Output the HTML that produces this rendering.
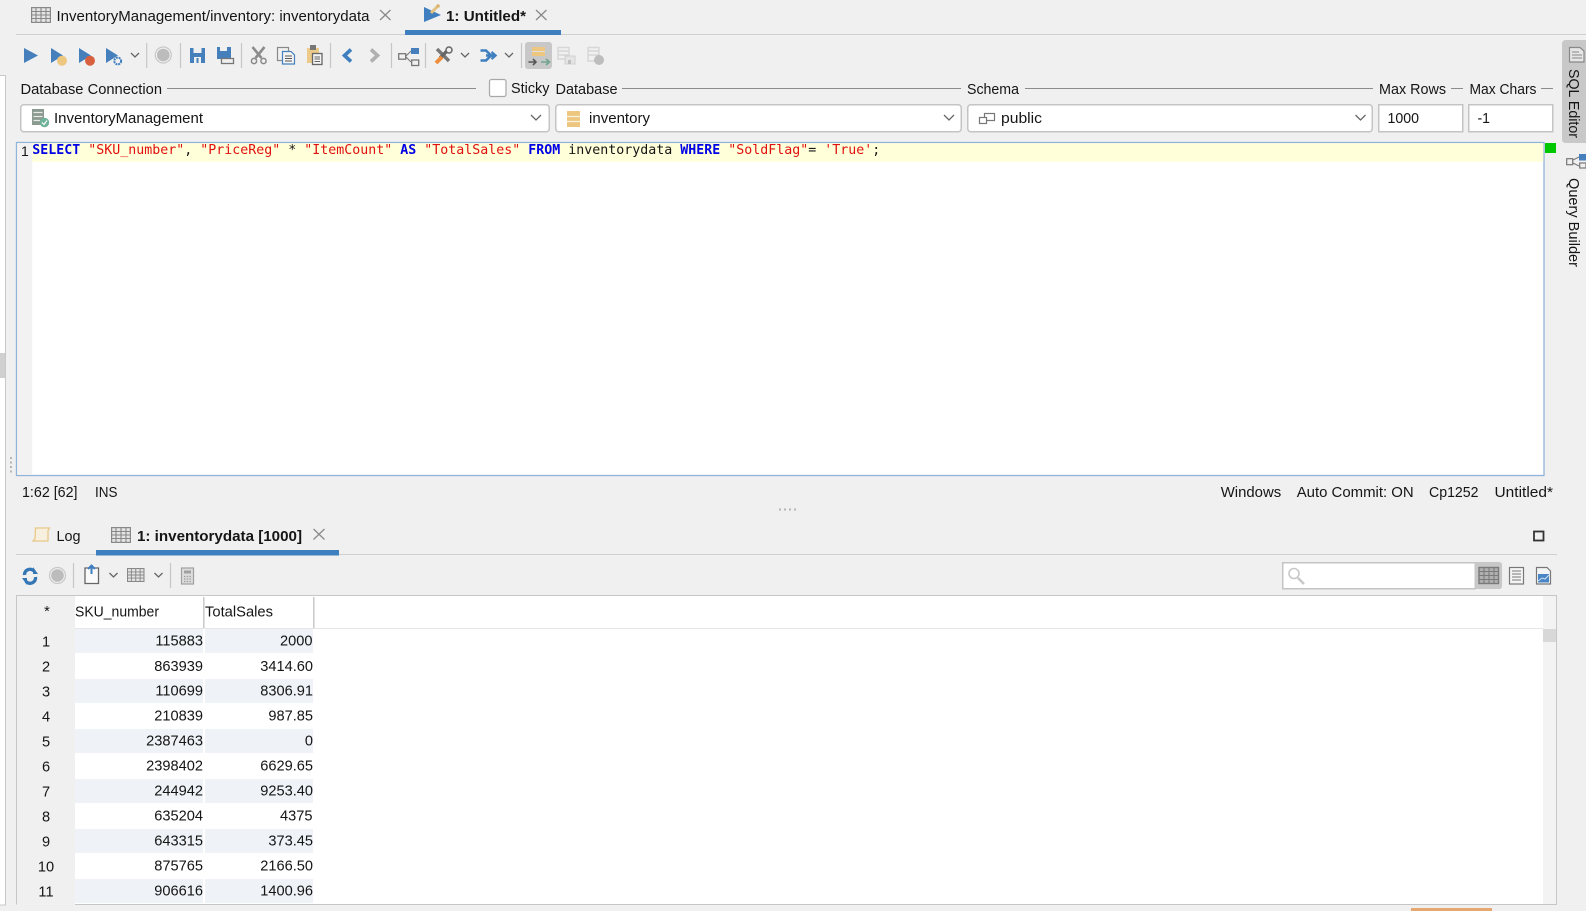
<!DOCTYPE html>
<html><head><meta charset="utf-8"><title>Inventory</title>
<style>
html,body{margin:0;padding:0;background:#f0f0f0;overflow:hidden}
svg{display:block}
text{font-family:"Liberation Sans",Arial,sans-serif;font-size:15px;fill:#151515;white-space:pre}
.n{font-size:14.6px;text-anchor:end}
.r{font-size:14.6px;text-anchor:middle}
.m{font-family:"DejaVu Sans Mono","Liberation Mono",monospace;font-size:13.28px}
.k{fill:#0000e6;font-weight:bold}.s{fill:#e01010}
.ch{fill:none;stroke:#666;stroke-width:1.3}
.x{fill:none;stroke:#8a8a8a;stroke-width:1.3}
.sep{stroke:#c6c6c6;stroke-width:1.2}
.ln{stroke:#8c8c8c;stroke-width:1}
.box{fill:#fff;stroke:#c4c4c4;stroke-width:1.5}
</style></head><body>
<svg xmlns="http://www.w3.org/2000/svg" width="1586" height="911" viewBox="0 0 1586 911">
<defs>
<symbol id="grid" viewBox="0 0 20 16"><rect x=".6" y=".6" width="18.8" height="14.8" fill="#e4e4e4" stroke="#888" stroke-width="1.2"/><path d="M0 4.5H20M0 8H20M0 11.5H20M5 0V16M10 0V16M15 0V16" stroke="#888" stroke-width="1.1" fill="none"/></symbol>
</defs>
<rect width="1586" height="911" fill="#f0f0f0"/>

<!-- left strip -->
<rect x="0" y="75" width="5.500" height="830" fill="#fff"/>
<path d="M0 75.500H5.500V905H0" fill="none" stroke="#c8c8c8" stroke-width="1"/>
<rect x="0" y="353" width="5" height="25" fill="#d0d0d0"/>

<!-- top tabs -->
<path d="M16 34.500H1586" stroke="#cfcfcf" stroke-width="1"/>
<use href="#grid" x="31" y="7" width="20" height="16"/>
<text x="56.500" y="21" textLength="313" lengthAdjust="spacingAndGlyphs">InventoryManagement/inventory: inventorydata</text>
<path class="x" d="M380 10L390.500 20M390.500 10L380 20"/>
<path d="M424 7L441 15L424 22Z" fill="#3f7fbf"/>
<path d="M431 13L437 7" stroke="#e2c27f" stroke-width="3" fill="none"/>
<circle cx="438" cy="6" r="1.800" fill="#d9b36a"/>
<text x="446" y="21" textLength="80" lengthAdjust="spacingAndGlyphs" style="font-weight:bold">1: Untitled*</text>
<path class="x" d="M536 10L546.500 20M546.500 10L536 20"/>
<rect x="405" y="30" width="156" height="5" fill="#3f7fbf"/>

<!-- toolbar -->
<g fill="#4580bd">
<path d="M24 48L38 55.500L24 63Z"/>
<path d="M51 48L63 55.500L51 63Z"/>
<path d="M79 48L91 55.500L79 63Z"/>
<path d="M106 48L118 55.500L106 63Z"/>
</g>
<circle cx="62" cy="60.700" r="5" fill="#edc77f"/>
<circle cx="90" cy="60.700" r="5" fill="#d9603f"/>
<circle cx="117.700" cy="61" r="3.400" fill="#f0f0f0" stroke="#3f7fbf" stroke-width="2" stroke-dasharray="2 .8"/>
<path class="ch" d="M131 53L135 57L139 53"/>
<path class="sep" d="M146.700 43V68M180.500 43V68M241.500 43V68M330.500 43V68M391.500 43V68M425.500 43V68M521.500 43V68"/>
<circle cx="163.300" cy="55" r="8" fill="#f0f0f0" stroke="#c8c8c8" stroke-width="1.200"/>
<circle cx="163.300" cy="55" r="6.300" fill="#bcbcbc"/>
<!-- save -->
<path d="M190 48H205V63H190Z" fill="#4580bd"/>
<rect x="193.500" y="48" width="8" height="5" fill="#f0f0f0"/>
<rect x="194" y="57" width="7" height="6" fill="#f0f0f0"/>
<rect x="196.500" y="58" width="2" height="5" fill="#4580bd"/>
<!-- save all -->
<path d="M217 47H231V59H217Z" fill="#4580bd"/>
<rect x="220" y="47" width="7" height="4" fill="#f0f0f0"/>
<rect x="221.500" y="58.500" width="12" height="5" fill="#f0f0f0" stroke="#777" stroke-width="1.300"/>
<!-- cut -->
<path d="M252.500 47L261.500 58M264.500 47L255.500 58" stroke="#8c8c8c" stroke-width="2.600" fill="none"/>
<circle cx="254" cy="61" r="2.600" fill="none" stroke="#888" stroke-width="1.500"/>
<circle cx="263.500" cy="61" r="2.600" fill="none" stroke="#888" stroke-width="1.500"/>
<!-- copy -->
<rect x="277.500" y="47.500" width="11" height="13" fill="#f0f0f0" stroke="#888" stroke-width="1.200"/>
<path d="M282.500 51.500H291L294.500 55V64H282.500Z" fill="#f4f4f4" stroke="#4580bd" stroke-width="1.200"/>
<path d="M285 56H292M285 58.500H292M285 61H292" stroke="#555" stroke-width="1"/>
<!-- paste -->
<rect x="307" y="48" width="12" height="15" fill="#eccb8a"/>
<rect x="310" y="45" width="6" height="5" fill="#777"/>
<rect x="312.500" y="53.500" width="9.500" height="11" fill="#f4f4f4" stroke="#666" stroke-width="1.300"/>
<path d="M314.500 57H320M314.500 59H320M314.500 61.500H320" stroke="#666" stroke-width="1"/>
<!-- nav -->
<path d="M351 49.500L344.500 55.500L351 61.500" fill="none" stroke="#3f7fbf" stroke-width="3.600"/>
<path d="M371 49.500L377.500 55.500L371 61.500" fill="none" stroke="#b0b0b0" stroke-width="3.600"/>
<!-- query builder -->
<rect x="411" y="48" width="8" height="6" fill="#4580bd"/>
<rect x="398.700" y="53.700" width="7" height="5.500" fill="none" stroke="#777" stroke-width="1.300"/>
<rect x="411.700" y="60" width="7" height="5.500" fill="none" stroke="#777" stroke-width="1.300"/>
<path d="M406 56L411 51M406 57L411 62" stroke="#777" stroke-width="1"/>
<!-- tools -->
<path d="M437 49L449 61" stroke="#777" stroke-width="3.400"/>
<path d="M450 48L440 58" stroke="#666" stroke-width="3.400"/>
<path d="M436 63L442 57" stroke="#ee8e3c" stroke-width="4"/>
<circle cx="449" cy="50" r="3" fill="#f0f0f0" stroke="#666" stroke-width="1.500"/>
<path class="ch" d="M461 53L465 57L469 53"/>
<!-- arrow -->
<path d="M480.500 50.500H486L491 55.500L486 60.500H480.500" fill="none" stroke="#3f7fbf" stroke-width="2.600"/>
<path d="M486 55.500H495M491.500 52L495.500 55.500L491.500 59" fill="none" stroke="#3f7fbf" stroke-width="2.400"/>
<path class="ch" d="M505 53L509 57L513 53"/>
<!-- active db -->
<rect x="525" y="42" width="27" height="27" rx="3" fill="#c8c8c8"/>
<rect x="532" y="47" width="13" height="9" fill="#edc77f"/>
<path d="M532 51.500H545" stroke="#e0e0e0" stroke-width="1"/>
<path d="M528.500 62H535.500M533 59L536 62L533 65" fill="none" stroke="#555" stroke-width="1.600"/>
<path d="M541 62H549M546 59L549.500 62L546 65" fill="none" stroke="#6fa58f" stroke-width="1.600"/>
<!-- disabled -->
<path d="M558 47.500H569V59H558ZM558 51H569M558 55H569" fill="none" stroke="#d6d6d6" stroke-width="1.400"/>
<rect x="565" y="56" width="10" height="8" fill="#e4e4e4" stroke="#cfcfcf"/>
<rect x="568" y="60" width="3" height="4" fill="#bfbfbf"/>
<path d="M588 47.500H599V61H588ZM588 51H599M588 55H599" fill="none" stroke="#d6d6d6" stroke-width="1.400"/>
<circle cx="599" cy="60" r="5" fill="#bdbdbd"/>

<!-- labels -->
<text x="20.500" y="94" textLength="141.500" lengthAdjust="spacingAndGlyphs">Database Connection</text>
<path class="ln" d="M167 88.500H476"/>
<rect x="489.500" y="79.500" width="16.500" height="17" rx="2" fill="#fff" stroke="#a8a8a8" stroke-width="1.200"/>
<text x="511" y="93" textLength="38.500" lengthAdjust="spacingAndGlyphs">Sticky</text>
<text x="555.500" y="94" textLength="62" lengthAdjust="spacingAndGlyphs">Database</text>
<path class="ln" d="M622 88.500H961"/>
<text x="967" y="94" textLength="52" lengthAdjust="spacingAndGlyphs">Schema</text>
<path class="ln" d="M1025 88.500H1373"/>
<text x="1379" y="94" textLength="67" lengthAdjust="spacingAndGlyphs">Max Rows</text>
<path class="ln" d="M1451 88.500H1463"/>
<text x="1469.500" y="94" textLength="67" lengthAdjust="spacingAndGlyphs">Max Chars</text>
<path class="ln" d="M1541 88.500H1553"/>

<!-- combos -->
<rect class="box" x="20.750" y="104.750" width="528.500" height="27" rx="3"/>
<rect class="box" x="555.750" y="104.750" width="405.500" height="27" rx="3"/>
<rect class="box" x="967.750" y="104.750" width="404.500" height="27" rx="3"/>
<rect class="box" x="1378.750" y="104.750" width="84" height="27" rx="0"/>
<rect class="box" x="1468.750" y="104.750" width="84" height="27" rx="0"/>
<rect x="32" y="109" width="12" height="16" fill="#8a9a90"/>
<path d="M33.500 112.500H42.500M33.500 116.500H42.500M33.500 120.500H40" stroke="#e8e8e8" stroke-width="1.300"/>
<circle cx="44.500" cy="122.500" r="4.700" fill="#6fb39a"/>
<path d="M42 122.500L44 124.500L47 120.500" fill="none" stroke="#fff" stroke-width="1.200"/>
<text x="54" y="123" textLength="149" lengthAdjust="spacingAndGlyphs">InventoryManagement</text>
<path class="ch" d="M531 115L536 120L541 115"/>
<rect x="567" y="111" width="13" height="16" fill="#edc77f"/>
<path d="M567 116.500H580M567 121.500H580" stroke="#fbf2de" stroke-width="1.300"/>
<text x="589" y="123" textLength="61" lengthAdjust="spacingAndGlyphs">inventory</text>
<path class="ch" d="M944 115L949 120L954 115"/>
<rect x="984.500" y="113.500" width="10" height="7" fill="none" stroke="#777" stroke-width="1.200"/>
<rect x="979.500" y="117.500" width="7" height="6" fill="#fff" stroke="#777" stroke-width="1.200"/>
<text x="1001" y="123" textLength="41" lengthAdjust="spacingAndGlyphs">public</text>
<path class="ch" d="M1355.500 115L1360.500 120L1365.500 115"/>
<text x="1387.500" y="123" textLength="31.500" lengthAdjust="spacingAndGlyphs">1000</text>
<text x="1477.500" y="123" textLength="12.500" lengthAdjust="spacingAndGlyphs">-1</text>

<!-- editor -->
<rect x="16.500" y="142.500" width="1527.500" height="333" fill="#fff" stroke="#8fb3d9" stroke-width="1.300"/>
<rect x="17.200" y="143.200" width="15" height="331.600" fill="#f2f2f2"/>
<rect x="32" y="143.200" width="1511.300" height="18.500" fill="#ffffd9"/>
<rect x="1545" y="143" width="11" height="10" fill="#00c800"/>
<text x="21" y="156" style="font-size:14px">1</text>
<text class="m" x="32.300" y="154" textLength="848" xml:space="preserve"><tspan class="k">SELECT</tspan> <tspan class="s">"SKU_number"</tspan>, <tspan class="s">"PriceReg"</tspan> * <tspan class="s">"ItemCount"</tspan> <tspan class="k">AS</tspan> <tspan class="s">"TotalSales"</tspan> <tspan class="k">FROM</tspan> inventorydata <tspan class="k">WHERE</tspan> <tspan class="s">"SoldFlag"</tspan>= <tspan class="s">'True'</tspan>;</text>
<g fill="#b5b5b5"><rect x="10" y="457" width="2" height="2"/><rect x="10" y="461.500" width="2" height="2"/><rect x="10" y="466" width="2" height="2"/><rect x="10" y="470.500" width="2" height="2"/></g>

<!-- right vertical tabs -->
<path d="M1586 40H1566Q1562 40 1562 44V139Q1562 143 1566 143H1586Z" fill="#c8c8c8"/>
<path d="M1569.500 47.500H1580L1584 51V62H1569.500Z" fill="#e6e6e6" stroke="#888" stroke-width="1.200"/>
<path d="M1572 52H1579M1572 55H1582M1572 58H1582" stroke="#888" stroke-width="1"/>
<text transform="translate(1569,69) rotate(90)" textLength="69" lengthAdjust="spacingAndGlyphs">SQL Editor</text>
<rect x="1579" y="154" width="7" height="6.500" fill="#4580bd"/>
<rect x="1566.700" y="158.700" width="6" height="6" fill="none" stroke="#777" stroke-width="1.200"/>
<rect x="1579.700" y="163" width="6.300" height="5" fill="none" stroke="#777" stroke-width="1.200"/>
<path d="M1573 160L1579 157M1573 163L1579 166" stroke="#777" stroke-width="1"/>
<text transform="translate(1569,178) rotate(90)" textLength="89" lengthAdjust="spacingAndGlyphs">Query Builder</text>

<!-- status -->
<text x="22" y="497" textLength="55.500" lengthAdjust="spacingAndGlyphs">1:62 [62]</text>
<text x="95" y="497" textLength="22.500" lengthAdjust="spacingAndGlyphs">INS</text>
<text x="1220.700" y="497" textLength="60.500" lengthAdjust="spacingAndGlyphs">Windows</text>
<text x="1296.700" y="497" textLength="117" lengthAdjust="spacingAndGlyphs">Auto Commit: ON</text>
<text x="1429" y="497" textLength="49.500" lengthAdjust="spacingAndGlyphs">Cp1252</text>
<text x="1494.500" y="497" textLength="58.500" lengthAdjust="spacingAndGlyphs">Untitled*</text>
<g fill="#b5b5b5"><rect x="779" y="508.500" width="2" height="2"/><rect x="784" y="508.500" width="2" height="2"/><rect x="789" y="508.500" width="2" height="2"/><rect x="794" y="508.500" width="2" height="2"/></g>

<!-- result tabs -->
<path d="M16 554.500H1557" stroke="#cfcfcf" stroke-width="1"/>
<path d="M35.500 528H49.500L48 530.500V541H33L35 538.500Z" fill="#f7f0df" stroke="#e8c886" stroke-width="1.300"/>
<text x="56.500" y="541" textLength="24" lengthAdjust="spacingAndGlyphs">Log</text>
<use href="#grid" x="111" y="527" width="20" height="16"/>
<text x="137" y="541" textLength="165" lengthAdjust="spacingAndGlyphs" style="font-weight:bold">1: inventorydata [1000]</text>
<path class="x" d="M313.500 529L324.500 539.500M324.500 529L313.500 539.500"/>
<rect x="96" y="550" width="243" height="5.500" fill="#3f7fbf"/>
<rect x="1534" y="531.500" width="9.500" height="9" fill="none" stroke="#333" stroke-width="1.800"/>

<!-- result toolbar -->
<path d="M24.500 575A5.500 5.500 0 0 1 34 571" fill="none" stroke="#3577b5" stroke-width="3.400"/>
<path d="M35.500 577A5.500 5.500 0 0 1 26 581.500" fill="none" stroke="#3577b5" stroke-width="3.400"/>
<path d="M33 567V574H38ZM27 585V578H22Z" fill="#3577b5"/>
<circle cx="57.500" cy="575.500" r="8" fill="#f0f0f0" stroke="#c8c8c8" stroke-width="1.200"/>
<circle cx="57.500" cy="575.500" r="6.300" fill="#bcbcbc"/>
<path class="sep" d="M73.500 563V588M170.500 563V588"/>
<path d="M85 568H98.500V583.500H85Z" fill="#fafafa" stroke="#666" stroke-width="1.300"/>
<path d="M91.500 566V574M88 569L91.500 565.500L95 569" fill="none" stroke="#3f7fbf" stroke-width="2"/>
<path class="ch" d="M109.500 573L113.500 577L117.500 573"/>
<use href="#grid" x="127" y="567" width="17.500" height="16"/>
<path class="ch" d="M154.500 573L158.500 577L162.500 573"/>
<rect x="181.500" y="568" width="12" height="16" fill="#dcdcdc" stroke="#a0a0a0" stroke-width="1.200"/>
<rect x="184" y="570.500" width="7" height="3" fill="#a0a0a0"/>
<path d="M184 576.500H191M184 579H191M184 581.500H191" stroke="#a0a0a0" stroke-width="1.200" stroke-dasharray="1.500 1.200"/>

<!-- search -->
<rect class="box" x="1282.750" y="562.750" width="192.500" height="26"/>
<circle cx="1294" cy="573.500" r="5" fill="none" stroke="#c8c8c8" stroke-width="1.600"/>
<path d="M1298 578L1304 584" stroke="#c8c8c8" stroke-width="2.600"/>
<path d="M1475 562H1499Q1502 562 1502 565V586Q1502 589 1499 589H1475Z" fill="#c8c8c8"/>
<rect x="1479" y="567.500" width="19.500" height="16" fill="#b0b0b0" stroke="#7a7a7a" stroke-width="1.400"/>
<path d="M1479 571.500H1498.500M1479 575.500H1498.500M1479 579.500H1498.500M1484 567.500V583.500M1489 567.500V583.500M1494 567.500V583.500" stroke="#7a7a7a" stroke-width="1.100"/>
<rect x="1509.500" y="567.500" width="14" height="16.500" fill="#f4f4f4" stroke="#777" stroke-width="1.200"/>
<path d="M1512 571H1521M1512 574H1521M1512 577H1521M1512 580H1521" stroke="#777" stroke-width="1.100"/>
<path d="M1536.500 567.500H1547L1550.500 571V584H1536.500Z" fill="#f4f4f4" stroke="#777" stroke-width="1.200"/>
<rect x="1538" y="574" width="11" height="8.500" fill="#4a86c5"/>
<path d="M1538 581L1542 578L1545 579L1549 575" stroke="#cfe0f2" fill="none"/>

<!-- table -->
<rect x="75" y="596" width="1468" height="308" fill="#fff"/>
<rect x="1543" y="596" width="13" height="308" fill="#f3f3f3"/>
<rect x="1543" y="629" width="13" height="13" fill="#d8d8d8"/>
<path d="M16.500 904.500V595.500H1556.500V904.500H75" fill="none" stroke="#c6c6c6" stroke-width="1"/>
<path d="M75 628.500H1543" stroke="#e6e6e6" stroke-width="1"/>
<rect x="203" y="597" width="1.600" height="31" fill="#cccccc"/>
<rect x="313" y="597" width="1.600" height="31" fill="#cccccc"/>
<text x="75" y="616.500" textLength="84" lengthAdjust="spacingAndGlyphs">SKU_number</text>
<text x="205" y="616.500" textLength="68" lengthAdjust="spacingAndGlyphs">TotalSales</text>
<text class="r" x="47" y="616">*</text>

<g fill="#eff3f7">
<rect x="75" y="629" width="128" height="24"/><rect x="205" y="629" width="108" height="24"/>
<rect x="75" y="679" width="128" height="24"/><rect x="205" y="679" width="108" height="24"/>
<rect x="75" y="729" width="128" height="24"/><rect x="205" y="729" width="108" height="24"/>
<rect x="75" y="779" width="128" height="24"/><rect x="205" y="779" width="108" height="24"/>
<rect x="75" y="829" width="128" height="24"/><rect x="205" y="829" width="108" height="24"/>
<rect x="75" y="879" width="128" height="24"/><rect x="205" y="879" width="108" height="24"/>
</g>
<text class="r" x="46" y="646.500">1</text><text class="n" x="203" y="645.500">115883</text><text class="n" x="312.500" y="645.500">2000</text>
<text class="r" x="46" y="671.500">2</text><text class="n" x="203" y="671">863939</text><text class="n" x="313" y="671">3414.60</text>
<text class="r" x="46" y="696.500">3</text><text class="n" x="203" y="695.500">110699</text><text class="n" x="313" y="695.500">8306.91</text>
<text class="r" x="46" y="721.500">4</text><text class="n" x="203" y="720.500">210839</text><text class="n" x="313" y="720.500">987.85</text>
<text class="r" x="46" y="746.500">5</text><text class="n" x="203" y="745.500">2387463</text><text class="n" x="313" y="745.500">0</text>
<text class="r" x="46" y="771.500">6</text><text class="n" x="203" y="770.500">2398402</text><text class="n" x="313" y="770.500">6629.65</text>
<text class="r" x="46" y="796.500">7</text><text class="n" x="203" y="795.500">244942</text><text class="n" x="313" y="795.500">9253.40</text>
<text class="r" x="46" y="821.500">8</text><text class="n" x="203" y="820.500">635204</text><text class="n" x="312.500" y="820.500">4375</text>
<text class="r" x="46" y="846.500">9</text><text class="n" x="203" y="845.500">643315</text><text class="n" x="313" y="845.500">373.45</text>
<text class="r" x="46" y="871.500">10</text><text class="n" x="203" y="870.500">875765</text><text class="n" x="313" y="870.500">2166.50</text>
<text class="r" x="46" y="896.500">11</text><text class="n" x="203" y="895.500">906616</text><text class="n" x="313" y="895.500">1400.96</text>

<rect x="1411" y="908" width="81" height="3" fill="#e5a870"/>
</svg>
</body></html>
